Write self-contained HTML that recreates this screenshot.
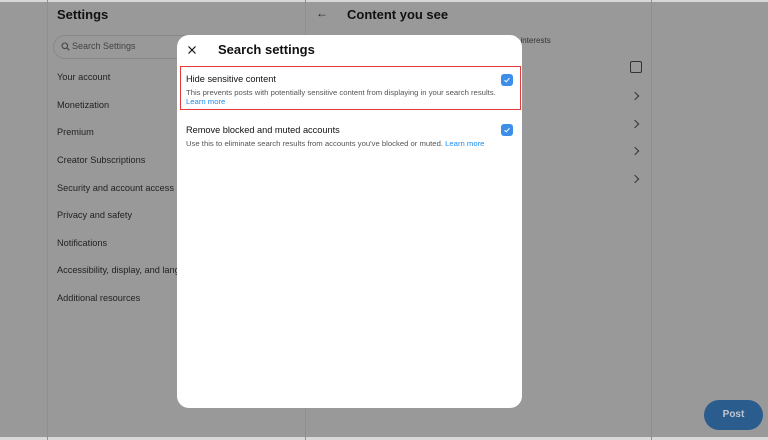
<!DOCTYPE html>
<html><head><style>
*{margin:0;padding:0;box-sizing:border-box}
body{width:768px;height:440px;background:#999;font-family:"Liberation Sans",sans-serif;position:relative;overflow:hidden;color:#1a1a1a}
.a{position:absolute}
.vl{position:absolute;top:0;bottom:0;width:1px;background:#8f8f8f}
.nav{position:absolute;left:57px;font-size:9.2px;color:#222}
.chev{position:absolute;left:632px;width:6px;height:6px;border-right:1.3px solid #333;border-top:1.3px solid #333;transform:rotate(45deg)}
.cb{position:absolute;left:501px;width:12px;height:12px;border-radius:3px;background:#3d8ee8}
.cb svg{position:absolute;left:2px;top:2px}
</style></head><body>
<div class="a" style="left:0;top:0;width:768px;height:2px;background:#d8d8d8"></div>
<div class="a" style="left:0;top:437px;width:768px;height:3px;background:#d8d8d8"></div>
<div class="vl" style="left:47px"></div>
<div class="vl" style="left:305px"></div>
<div class="vl" style="left:651px"></div>
<div class="a" style="left:57px;top:7px;font-size:13px;font-weight:bold;color:#111">Settings</div>
<div class="a" style="left:53px;top:35px;width:250px;height:24px;border:1px solid #888;border-radius:12px"></div>
<svg class="a" style="left:61px;top:42px" width="9" height="9" viewBox="0 0 9 9"><circle cx="3.8" cy="3.8" r="2.8" fill="none" stroke="#444" stroke-width="1.1"/><path d="M6 6L8.3 8.3" stroke="#444" stroke-width="1.1"/></svg>
<div class="a" style="left:72px;top:41px;font-size:9px;color:#444">Search Settings</div>
<div class="nav" style="top:72px">Your account</div>
<div class="nav" style="top:100px">Monetization</div>
<div class="nav" style="top:127px">Premium</div>
<div class="nav" style="top:155px">Creator Subscriptions</div>
<div class="nav" style="top:183px">Security and account access</div>
<div class="nav" style="top:210px">Privacy and safety</div>
<div class="nav" style="top:238px">Notifications</div>
<div class="nav" style="top:265px;width:120px;white-space:nowrap;overflow:hidden">Accessibility, display, and languages</div>
<div class="nav" style="top:293px">Additional resources</div>
<div class="a" style="left:316px;top:6px;font-size:12px;color:#222">←</div>
<div class="a" style="left:347px;top:7px;font-size:13px;font-weight:bold;color:#111">Content you see</div>
<div class="a" style="left:480px;top:36px;font-size:8px;color:#333">Topics and interests</div>
<div class="a" style="left:630px;top:61px;width:12px;height:12px;border:1.5px solid #333;border-radius:2px"></div>
<div class="chev" style="top:93px"></div>
<div class="chev" style="top:121px"></div>
<div class="chev" style="top:148px"></div>
<div class="chev" style="top:176px"></div>
<div class="a" style="left:704px;top:400px;width:59px;height:30px;border-radius:15px;background:#2b5c8e;color:#bfc8d2;font-size:10px;font-weight:bold;text-align:center;line-height:30px">Post</div>

<div class="a" style="left:177px;top:35px;width:345px;height:373px;background:#fff;border-radius:12px">
<svg class="a" style="left:11px;top:11px" width="8" height="8" viewBox="0 0 8 8"><path d="M0.5 0.5L7.5 7.5M7.5 0.5L0.5 7.5" stroke="#111" stroke-width="1.2"/></svg>
<div class="a" style="left:41px;top:7px;font-size:13px;font-weight:bold;color:#111">Search settings</div>
<div class="a" style="left:3px;top:31px;width:341px;height:44px;border:1.3px solid #e53a3a"></div>
<div class="a" style="left:9px;top:39px;font-size:9.2px;color:#111">Hide sensitive content</div>
<div class="a" style="left:9px;top:53px;font-size:7.7px;color:#555;white-space:nowrap">This prevents posts with potentially sensitive content from displaying in your search results.</div>
<div class="a" style="left:9px;top:62px;font-size:7.7px;color:#1d8ef0">Learn more</div>
<div class="a" style="left:9px;top:90px;font-size:9.2px;color:#111">Remove blocked and muted accounts</div>
<div class="a" style="left:9px;top:104px;font-size:7.7px;color:#555;white-space:nowrap">Use this to eliminate search results from accounts you've blocked or muted. <span style="color:#1d8ef0">Learn more</span></div>
</div>
<div class="cb" style="top:74px"><svg width="8" height="8" viewBox="0 0 8 8"><path d="M1.5 4.2L3.2 5.8L6.5 2.2" fill="none" stroke="#fff" stroke-width="1"/></svg></div>
<div class="cb" style="top:124px"><svg width="8" height="8" viewBox="0 0 8 8"><path d="M1.5 4.2L3.2 5.8L6.5 2.2" fill="none" stroke="#fff" stroke-width="1"/></svg></div>
</body></html>
